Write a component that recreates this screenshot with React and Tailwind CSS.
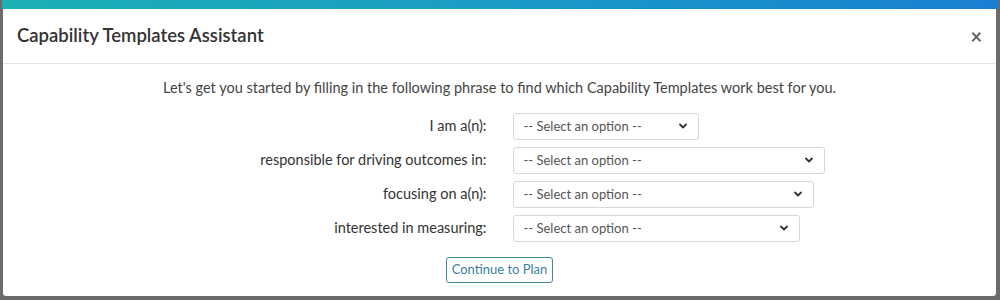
const rows = [
  { label: "I am a(n):", width: "w-[186px]" },
  { label: "responsible for driving outcomes in:", width: "w-[312px]" },
  { label: "focusing on a(n):", width: "w-[301px]" },
  { label: "interested in measuring:", width: "w-[287px]" },
];

function Chevron() {
  return (
    <svg width="10" height="10" viewBox="0 0 10 10" className="text-[#333]">
      <path d="M2 3.5 L5 6.5 L8 3.5" fill="none" stroke="currentColor" strokeWidth="1.8" strokeLinecap="round" strokeLinejoin="round" />
    </svg>
  );
}

export default function App() {
  return (
    <div
      className="w-[1000px] h-[300px] bg-[#6b6b6b] overflow-hidden flex flex-col"
      style={{ fontFamily: "Lato, 'Noto Sans', sans-serif" }}
    >
      <div className="h-[9px] mx-[2px] bg-gradient-to-r from-[#1bb0b4] via-[#1c9bc6] to-[#1a7fd3]" />
      <div className="mx-[3px] w-[993px] h-[287px] bg-white rounded-b-[3px] flex flex-col">
        {/* Header */}
        <div className="h-[55px] flex items-center justify-between pl-[14px] pr-[14px] border-b border-[#e2e2e2]">
          <h2 className="text-[18.5px] font-semibold text-[#333]">Capability Templates Assistant</h2>
          <button className="text-[#666] text-[20px] font-bold leading-none">×</button>
        </div>

        {/* Body */}
        <div className="flex flex-col items-center pt-[13px]">
          <p className="text-[14.5px] text-[#444]">
            Let's get you started by filling in the following phrase to find which Capability Templates work best for you.
          </p>

          <div className="mt-[14px] grid grid-cols-2 gap-x-[26px] gap-y-[7px] w-full">
            {rows.map((r) => (
              <div key={r.label} className="contents">
                <div className="text-right text-[14.5px] text-[#333] pt-[2px]">{r.label}</div>
                <div
                  className={`${r.width} h-[27px] border border-[#d8d8d8] rounded-[3px] flex items-center justify-between pl-[10px] pr-[10px] text-[13px] text-[#555]`}
                >
                  <span>-- Select an option --</span>
                  <Chevron />
                </div>
              </div>
            ))}
          </div>

          <button className="mt-[15px] h-[26px] w-[107px] border border-[#3f8aa3] rounded-[3px] text-[13px] text-[#3a7e9c]">
            Continue to Plan
          </button>
        </div>
      </div>
    </div>
  );
}
